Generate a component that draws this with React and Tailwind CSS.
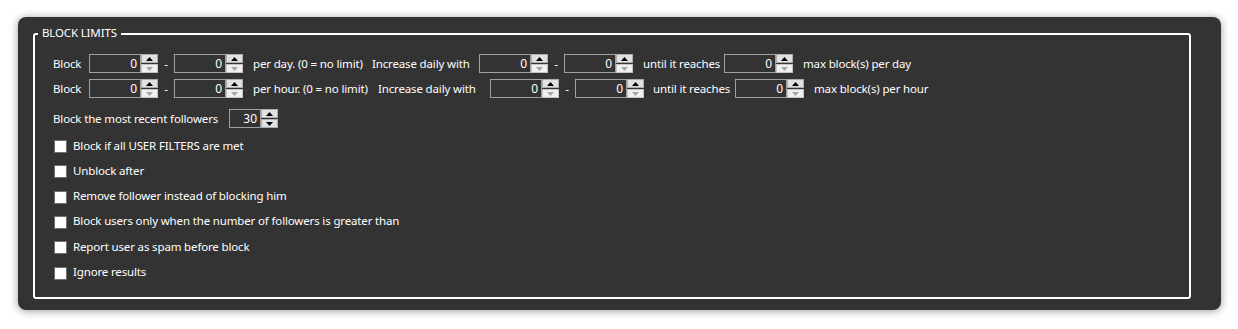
import React from 'react';

const font = { fontFamily: '"Noto Sans", "Open Sans", sans-serif' };

function Arrow({ up, disabled }) {
  return (
    <svg width="7" height="4" viewBox="0 0 7 4" className="block">
      <polygon
        points={up ? '0,4 3.5,0 7,4' : '0,0 7,0 3.5,4'}
        fill={disabled ? '#a6a6a6' : '#000000'}
      />
    </svg>
  );
}

function Spinner({ value = 0, width = 'w-[52px]', downDisabled = true }) {
  return (
    <div className="flex h-[19px] shrink-0 tracking-normal">
      <div className={`${width} border border-[#a0a0a0] bg-[#333333] text-right pr-[3px] leading-[17px] text-[12px] text-white`}>
        {value}
      </div>
      <div className="flex flex-col w-[17px]">
        <div className="h-[9px] mb-[1px] flex items-center justify-center bg-[#e1e1e1] border border-[#adadad]">
          <Arrow up />
        </div>
        <div
          className={`h-[9px] flex items-center justify-center border ${
            downDisabled ? 'bg-[#f0f0f0] border-[#c4c4c4]' : 'bg-[#e1e1e1] border-[#adadad]'
          }`}
        >
          <Arrow disabled={downDisabled} />
        </div>
      </div>
    </div>
  );
}

function Dash() {
  return <span className="w-[16px] text-center shrink-0">-</span>;
}

function Check({ label }) {
  return (
    <div className="flex items-center h-[25.3px]">
      <span className="ml-[1px] w-[13px] h-[13px] bg-white border border-[#6f6f6f] shrink-0"></span>
      <span className="ml-[6px] pb-[3px] whitespace-nowrap">{label}</span>
    </div>
  );
}

export default function App() {
  return (
    <div
      className="w-[1238px] h-[329px] bg-white pt-[17px] pl-[18px] text-[11.5px] tracking-[-0.15px] text-white"
      style={font}
    >
      <div className="w-[1203px] h-[293px] rounded-[8px] bg-[#333333] shadow-[0_1px_8px_rgba(0,0,0,0.4)] pt-[16px] pl-[15px]">
        <div className="relative w-[1158px] h-[266px] border-2 border-white rounded-[3px] pl-[18px] pt-[19px]">
          <span className="absolute -top-[10px] left-[3px] bg-[#333333] pl-[4px] pr-[4px] leading-[16px] whitespace-nowrap">
            BLOCK LIMITS
          </span>

          {/* per day */}
          <div className="flex items-center h-[19px] whitespace-nowrap">
            <span className="w-[36px] shrink-0">Block</span>
            <Spinner />
            <Dash />
            <Spinner />
            <span className="ml-[10px] w-[119px] shrink-0">per day. (0 = no limit)</span>
            <span className="w-[107px] shrink-0">Increase daily with</span>
            <Spinner />
            <Dash />
            <Spinner />
            <span className="ml-[10px] w-[81px] shrink-0">until it reaches</span>
            <Spinner />
            <span className="ml-[10px]">max block(s) per day</span>
          </div>

          {/* per hour */}
          <div className="flex items-center h-[19px] mt-[6px] whitespace-nowrap">
            <span className="w-[36px] shrink-0">Block</span>
            <Spinner />
            <Dash />
            <Spinner />
            <span className="ml-[10px] w-[125px] shrink-0">per hour. (0 = no limit)</span>
            <span className="w-[112px] shrink-0">Increase daily with</span>
            <Spinner />
            <Dash />
            <Spinner />
            <span className="ml-[9px] w-[82px] shrink-0">until it reaches</span>
            <Spinner />
            <span className="ml-[10px]">max block(s) per hour</span>
          </div>

          <div className="flex items-center h-[19px] mt-[11px] whitespace-nowrap">
            <span className="w-[176px] shrink-0">Block the most recent followers</span>
            <Spinner value={30} width="w-[32px]" downDisabled={false} />
          </div>

          <div className="mt-[6px]">
            <Check label="Block if all USER FILTERS are met" />
            <Check label="Unblock after" />
            <Check label="Remove follower instead of blocking him" />
            <Check label="Block users only when the number of followers is greater than" />
            <Check label="Report user as spam before block" />
            <Check label="Ignore results" />
          </div>
        </div>
      </div>
    </div>
  );
}
